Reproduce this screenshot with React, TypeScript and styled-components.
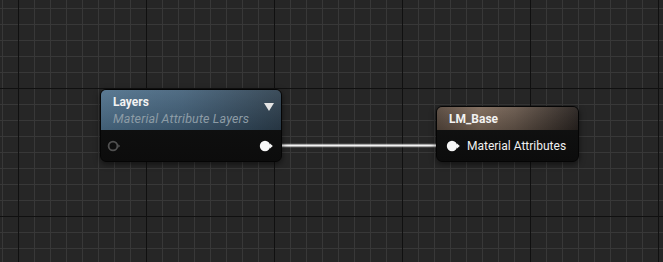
import React from 'react';
import styled, { createGlobalStyle } from 'styled-components';

const GlobalStyle = createGlobalStyle`
  html, body {
    margin: 0;
    padding: 0;
    background: #262626;
  }
  body {
    font-family: Roboto, "Noto Sans", sans-serif;
  }
`;

const Canvas = styled.div`
  position: relative;
  width: 663px;
  height: 262px;
  overflow: hidden;
  background-color: #262626;
  background-image:
    linear-gradient(to right, #101010 1px, transparent 1px),
    linear-gradient(to bottom, #101010 1px, transparent 1px),
    linear-gradient(to right, #383838 1px, transparent 1px),
    linear-gradient(to bottom, #383838 1px, transparent 1px);
  background-size: 128px 128px, 128px 128px, 16px 16px, 16px 16px;
  background-position: 18px 0, 0 88px, 2px 0, 0 8px;
`;

const Wire = styled.svg`
  position: absolute;
  left: 0;
  top: 0;
  pointer-events: none;
`;

const Node = styled.div<{ $x: number; $y: number; $w: number }>`
  position: absolute;
  left: ${(p) => p.$x}px;
  top: ${(p) => p.$y}px;
  width: ${(p) => p.$w}px;
  border: 1px solid #050505;
  border-radius: 6px;
  overflow: hidden;
  background: linear-gradient(to bottom, #121313, #0c0c0c);
  box-shadow: 0 2px 6px rgba(0, 0, 0, 0.55);
`;

const Header = styled.div<{ $tone: 'blue' | 'brown'; $h: number }>`
  position: relative;
  height: ${(p) => p.$h}px;
  padding: 4px 12px 0 12px;
  box-sizing: border-box;
  background: ${(p) =>
    p.$tone === 'blue'
      ? 'linear-gradient(to bottom, rgba(255,255,255,0.08), rgba(0,0,0,0.15)), linear-gradient(to right, #4d6f8a 0%, #426079 45%, #2c3e4d 100%)'
      : 'linear-gradient(to bottom, rgba(255,255,255,0.04), rgba(0,0,0,0.2)), linear-gradient(to right, #5a4b40 0%, #7f6b5c 30%, #6a5a4e 55%, #2b2522 100%)'};
`;

const Title = styled.div`
  color: #f2f2f2;
  font-size: 12px;
  font-weight: 700;
  line-height: 16px;
`;

const Subtitle = styled.div`
  color: #8d9ca6;
  font-size: 12.5px;
  font-style: italic;
  letter-spacing: 0.15px;
  line-height: 17px;
`;

const Dropdown = styled.div`
  position: absolute;
  right: 7px;
  top: 13px;
  width: 0;
  height: 0;
  border-left: 5.5px solid transparent;
  border-right: 5.5px solid transparent;
  border-top: 8px solid #e4e4e4;
`;

const Body = styled.div<{ $h: number; $pad: number }>`
  height: ${(p) => p.$h}px;
  display: flex;
  align-items: center;
  justify-content: space-between;
  padding: 0 ${(p) => p.$pad}px;
  box-sizing: border-box;
`;

const PinRow = styled.div`
  display: flex;
  align-items: center;
  gap: 5px;
  color: #f0f0f0;
  font-size: 12px;
`;

const Pin = ({ filled }: { filled: boolean }) => (
  <svg width="16" height="12" viewBox="0 0 16 12">
    {filled ? (
      <>
        <circle cx="6" cy="6" r="5.2" fill="#f6f6f6" />
        <path d="M11 3.6 L13.8 6 L11 8.4 Z" fill="#f6f6f6" />
      </>
    ) : (
      <>
        <circle cx="6" cy="6" r="4.4" fill="none" stroke="#505050" strokeWidth="1.8" />
        <path d="M11.2 4.2 L13.2 6 L11.2 7.8 Z" fill="#505050" />
      </>
    )}
  </svg>
);

export default function App() {
  return (
    <>
      <GlobalStyle />
      <Canvas>
        <Wire width="663" height="262">
          <line x1="272" y1="145.5" x2="448" y2="145.5" stroke="rgba(255,255,255,0.25)" strokeWidth="4" />
          <line x1="272" y1="145.5" x2="448" y2="145.5" stroke="#f4f4f4" strokeWidth="2" />
        </Wire>

        <Node $x={100} $y={89} $w={180}>
          <Header $tone="blue" $h={40}>
            <Title>Layers</Title>
            <Subtitle>Material Attribute Layers</Subtitle>
            <Dropdown />
          </Header>
          <Body $h={31} $pad={6}>
            <Pin filled={false} />
            <Pin filled />
          </Body>
        </Node>

        <Node $x={436} $y={106} $w={141}>
          <Header $tone="brown" $h={23}>
            <Title>LM_Base</Title>
          </Header>
          <Body $h={31} $pad={9}>
            <PinRow>
              <Pin filled />
              <span>Material Attributes</span>
            </PinRow>
          </Body>
        </Node>
      </Canvas>
    </>
  );
}
